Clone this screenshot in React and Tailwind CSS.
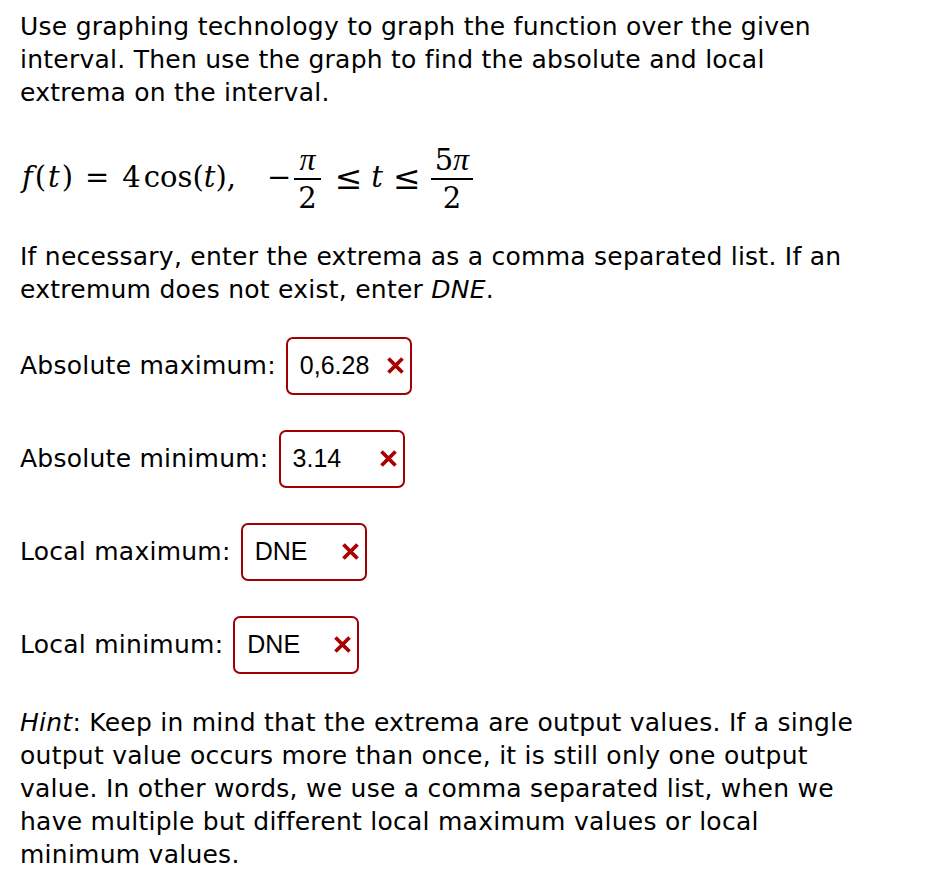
import React from 'react';

const Cross = () => (
  <svg width="19" height="19" viewBox="0 0 19 19" className="shrink-0">
    <path d="M2.5 2.5 L16.5 16.5 M16.5 2.5 L2.5 16.5" stroke="#aa0000" strokeWidth="3.8" />
  </svg>
);

const AnswerBox = ({ value }) => (
  <div className="ml-[10px] flex h-[58px] w-[126px] items-center rounded-[7px] border-2 border-[#a00000] pl-[12px] pr-[5px]">
    <span className="flex-1 font-['Liberation_Sans',sans-serif] text-[25px] leading-none tracking-normal text-black">{value}</span>
    <Cross />
  </div>
);

const Row = ({ label, value }) => (
  <div className="flex items-center">
    <span>{label}</span>
    <AnswerBox value={value} />
  </div>
);

const Pi = () => <i className="font-['Liberation_Serif',serif] text-[32px]">π</i>;

const Frac = ({ top, bottom, className }) => (
  <span className={`inline-flex flex-col items-center leading-none ${className}`}>
    <span className="px-[4px] pb-[3px]">{top}</span>
    <span className="h-[1.5px] w-full bg-black" />
    <span className="px-[4px] pt-[4px]">{bottom}</span>
  </span>
);

export default function App() {
  return (
    <div className="min-h-screen bg-white px-5 pt-[10px] font-['DejaVu_Sans',sans-serif] text-[25px] leading-[33px] tracking-[0.25px] text-black">
      <p>
        Use graphing technology to graph the function over the given
        <br />
        interval. Then use the graph to find the absolute and local
        <br />
        extrema on the interval.
      </p>

      {/* function and interval */}
      <div className="mt-[34px] flex items-center font-['DejaVu_Serif',serif] text-[29px] leading-none tracking-normal">
        <span className="ml-[2px] tracking-[2px]">
          <i>f</i>(<i>t</i>)
        </span>
        <span className="ml-[10px]">=</span>
        <span className="ml-[13px]">4</span>
        <span className="ml-[3px]">cos(<i>t</i>),</span>
        <span className="ml-[31px]">−</span>
        <Frac className="ml-[3px]" top={<Pi />} bottom="2" />
        <span className="ml-[14px] text-[33px]">≤</span>
        <i className="ml-[9px]">t</i>
        <span className="ml-[10px] text-[33px]">≤</span>
        <Frac className="ml-[10px]" top={<span>5<Pi /></span>} bottom="2" />
      </div>

      <p className="mt-[27px]">
        If necessary, enter the extrema as a comma separated list. If an
        <br />
        extremum does not exist, enter <i>DNE</i>.
      </p>

      <div className="mt-[31px] flex flex-col gap-[35px]">
        <Row label="Absolute maximum:" value="0,6.28" />
        <Row label="Absolute minimum:" value="3.14" />
        <Row label="Local maximum:" value="DNE" />
        <Row label="Local minimum:" value="DNE" />
      </div>

      <p className="mt-[32px]">
        <i>Hint</i>: Keep in mind that the extrema are output values. If a single
        <br />
        output value occurs more than once, it is still only one output
        <br />
        value. In other words, we use a comma separated list, when we
        <br />
        have multiple but different local maximum values or local
        <br />
        minimum values.
      </p>
    </div>
  );
}
